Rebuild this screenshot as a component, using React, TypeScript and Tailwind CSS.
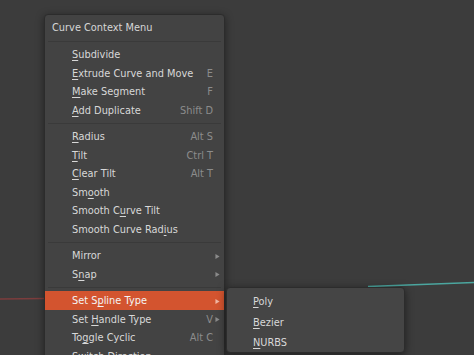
import React from 'react';

type Item = {
  label: string;
  key?: number; // index of the underlined letter
  shortcut?: string;
  sub?: boolean;
  active?: boolean;
};

const groups: Item[][] = [
  [
    { label: 'Subdivide', key: 0 },
    { label: 'Extrude Curve and Move', key: 0, shortcut: 'E' },
    { label: 'Make Segment', key: 0, shortcut: 'F' },
    { label: 'Add Duplicate', key: 0, shortcut: 'Shift D' },
  ],
  [
    { label: 'Radius', key: 0, shortcut: 'Alt S' },
    { label: 'Tilt', key: 0, shortcut: 'Ctrl T' },
    { label: 'Clear Tilt', key: 0, shortcut: 'Alt T' },
    { label: 'Smooth', key: 2 },
    { label: 'Smooth Curve Tilt', key: 8 },
    { label: 'Smooth Curve Radius', key: 16 },
  ],
  [
    { label: 'Mirror', sub: true },
    { label: 'Snap', key: 1, sub: true },
  ],
  [
    { label: 'Set Spline Type', key: 5, sub: true, active: true },
    { label: 'Set Handle Type', key: 4, shortcut: 'V', sub: true },
    { label: 'Toggle Cyclic', key: 2, shortcut: 'Alt C' },
    { label: 'Switch Direction', key: 1 },
  ],
];

const Label = ({ text, k }: { text: string; k?: number }) => {
  if (k === undefined) return <span>{text}</span>;
  return (
    <span>
      {text.slice(0, k)}
      <span className="underline decoration-1 underline-offset-[2px]">{text[k]}</span>
      {text.slice(k + 1)}
    </span>
  );
};

const Arrow = ({ light }: { light?: boolean }) => (
  <svg width="6" height="7" viewBox="0 0 6 7" className="ml-[2px]">
    <path d="M0.5 0.5 L5.5 3.5 L0.5 6.5 Z" fill={light ? '#f0b8a4' : '#8a8a8a'} />
  </svg>
);

const Separator = () => (
  <div className="h-2 flex items-center px-[3px]">
    <div className="h-px w-full bg-[#3a3a3a]" />
  </div>
);

const Row = ({ item }: { item: Item }) => (
  <div
    className={`h-[18.5px] flex items-center pt-[2px] pl-[27px] pr-[4px] ${
      item.active ? 'bg-[#d3542f] text-[#f4f4f4]' : 'text-[#d8d8d8]'
    }`}
  >
    <Label text={item.label} k={item.key} />
    <div className="flex-1" />
    {item.shortcut && (
      <span className={item.active ? 'text-[#f0c0b0]' : 'text-[#8c8c8c]'}>{item.shortcut}</span>
    )}
    <div className="w-[7px] flex justify-end">{item.sub && <Arrow light={item.active} />}</div>
  </div>
);

export default function App() {
  return (
    <div
      className="relative h-[355px] w-[474px] overflow-hidden bg-[#3c3c3c] text-[9.8px] leading-none"
      style={{ fontFamily: '"DejaVu Sans", "Liberation Sans", sans-serif' }}
    >
      {/* viewport curves */}
      <svg className="absolute inset-0" width="474" height="355">
        <line x1="0" y1="299" x2="44" y2="298.5" stroke="#7c3d3d" strokeWidth="1.5" />
        <line x1="368" y1="286.5" x2="474" y2="282.5" stroke="#4ba69f" strokeWidth="1.6" />
      </svg>

      {/* main menu */}
      <div className="absolute left-[44px] top-[14px] w-[181px] rounded-[4px] border border-[#2c2c2c] bg-[#434343] shadow-[0_2px_8px_rgba(0,0,0,0.45)]">
        <div className="h-[22px] flex items-center pt-[4px] pl-[7px] text-[#d6d6d6]">Curve Context Menu</div>
        <Separator />
        {groups.map((g, gi) => (
          <div key={gi}>
            {gi > 0 && <Separator />}
            {g.map((it) => (
              <Row key={it.label} item={it} />
            ))}
          </div>
        ))}
      </div>

      {/* submenu */}
      <div className="absolute left-[226px] top-[287px] w-[179px] h-[66px] rounded-[4px] border border-[#2c2c2c] bg-[#454545] pt-[4px] shadow-[0_2px_8px_rgba(0,0,0,0.5)]">
        {[
          { label: 'Poly', key: 0 },
          { label: 'Bezier', key: 0 },
          { label: 'NURBS', key: 0 },
        ].map((it) => (
          <div key={it.label} className="h-[20.3px] flex items-center pl-[26px] text-[#d8d8d8]">
            <Label text={it.label} k={it.key} />
          </div>
        ))}
      </div>
    </div>
  );
}
